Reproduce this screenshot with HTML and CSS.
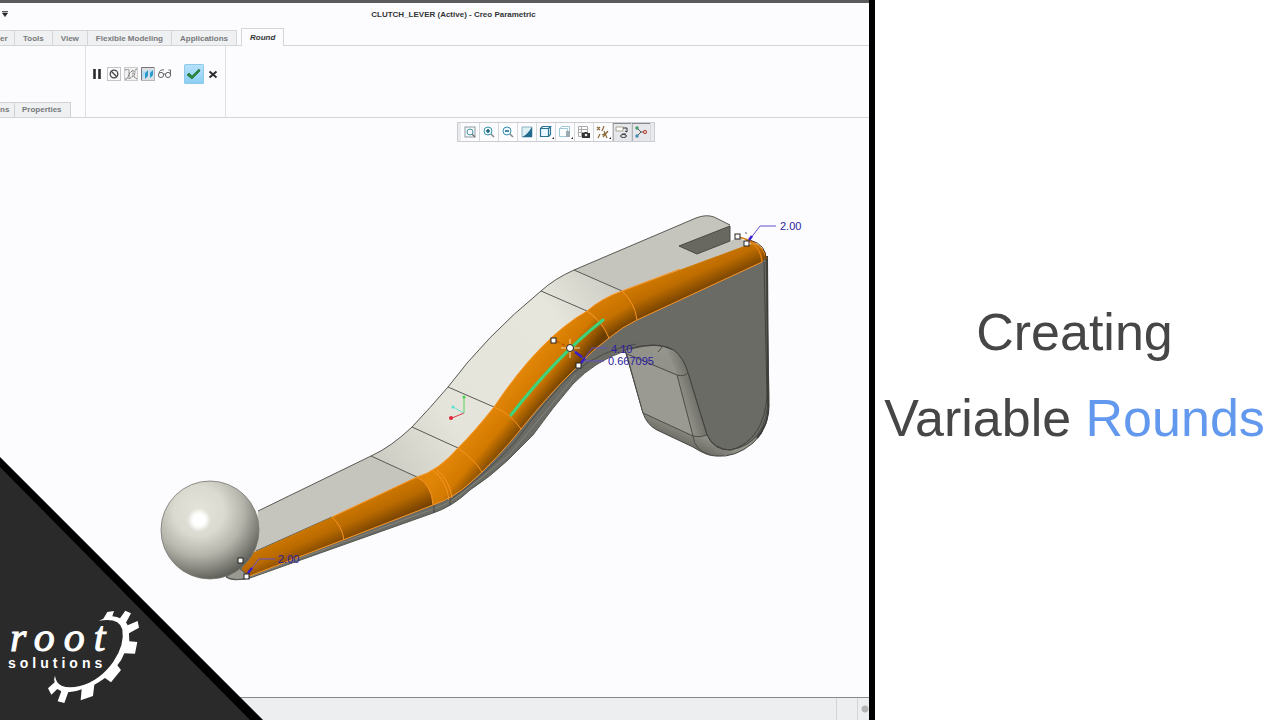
FILE: index.html
```html
<!DOCTYPE html>
<html lang="en">
<head>
<meta charset="utf-8">
<title>Creating Variable Rounds</title>
<link rel="stylesheet" href="styles.css">
</head>
<body>
<div class="slide">
  <main class="app">
    <header class="titlebar">
      <button class="menu-caret" aria-label="Customize toolbar">
        <svg width="6" height="6" viewBox="0 0 6 6"><path d="M0 .5H6M.5 2H5.5L3 5.500Z" stroke="#333" stroke-width=".8" fill="#222"/></svg>
      </button>
      <span class="title">CLUTCH_LEVER (Active) - Creo Parametric</span>
    </header>
    <nav class="tabs">
      <button class="tab tab-cut">er</button>
      <button class="tab">Tools</button>
      <button class="tab">View</button>
      <button class="tab">Flexible Modeling</button>
      <button class="tab">Applications</button>
      <button class="tab tab-active">Round</button>
    </nav>
    <section class="ribbon">
      <div class="ribbon-panels">
        <button class="panel-tab panel-cut">ns</button>
        <button class="panel-tab">Properties</button>
      </div>
      <div class="ribbon-actions">
        <button class="tool" aria-label="Pause"><svg width="16" height="16" viewBox="0 0 16 16"><path d="M5.500 3v10M10.500 3v10" stroke="#2b2b2b" stroke-width="2.600"/></svg></button>
        <button class="tool" aria-label="No preview"><svg width="16" height="16" viewBox="0 0 16 16"><rect x="1.500" y="1.500" width="13" height="13" fill="#fafafa" stroke="#c4c4c6"/><circle cx="8" cy="8" r="3.800" fill="none" stroke="#444" stroke-width="1.300"/><path d="M5.300 5.300l5.400 5.400" stroke="#444" stroke-width="1.300"/></svg></button>
        <button class="tool" aria-label="Unattached preview"><svg width="16" height="16" viewBox="0 0 16 16"><rect x="1.500" y="1.500" width="13" height="13" fill="#f1f1f1" stroke="#ccc"/><path d="M2 4q3-1 4 0v5l-2 4H2M6 8l4-4v6l-4 3zM14 3q-3 1-2 3l-1 5 3 2" fill="none" stroke="#777" stroke-dasharray="2 .7"/></svg></button>
        <button class="tool" aria-label="Attached preview"><svg width="16" height="16" viewBox="0 0 16 16"><rect x="1.500" y="1.500" width="13" height="13" fill="#dcdfe3" stroke="#b5b5b9"/><path d="M1.500 14V1.500H14" fill="none" stroke="#77777b"/><path d="M2 5h3v5l-3 3zM9 4h4v5l-3 3z" fill="#b5dcef"/><path d="M5 7l3-3v6l-3 3zM10 7l3-3v5l-3 3z" fill="#299acb"/></svg></button>
        <button class="tool" aria-label="Verify"><svg width="16" height="16" viewBox="0 0 16 16"><g fill="none" stroke="#666"><circle cx="4" cy="9" r="2.600"/><circle cx="11" cy="9" r="2.600"/><path d="M6.500 8h2M2 7q1-4 5-3M13.500 9V4h-2"/></g></svg></button>
        <button class="accept" aria-label="Accept"><svg width="20" height="20" viewBox="0 0 20 20"><path d="M3 11l2-2 3 3 7-7 1 2-8 8z" fill="#278a3a" stroke="#176628" stroke-width=".6"/></svg></button>
        <button class="tool" aria-label="Cancel"><svg width="16" height="16" viewBox="0 0 16 16"><path d="M4.500 5.500l7 6M11.500 5.500l-7 6" stroke="#2b2b2b" stroke-width="2"/></svg></button>
      </div>
    </section>
    <section class="viewport">
      <svg class="model" viewBox="0 118 869 579" role="img" aria-label="Clutch lever model">
        <defs>
          <radialGradient id="ball" gradientUnits="userSpaceOnUse" cx="199" cy="511" r="72">
            <stop offset="0" stop-color="#e4e4da"/><stop offset=".35" stop-color="#dadad0"/><stop offset=".62" stop-color="#b4b4ab"/><stop offset=".85" stop-color="#7c7c75"/><stop offset="1" stop-color="#565651"/>
          </radialGradient>
          <radialGradient id="shine"><stop offset="0" stop-color="#fff"/><stop offset=".5" stop-color="#fff"/><stop offset="1" stop-color="#fff" stop-opacity="0"/></radialGradient>
          <linearGradient id="bend" gradientUnits="userSpaceOnUse" x1="365" y1="470" x2="625" y2="275">
            <stop offset="0" stop-color="#c8c8c0"/><stop offset=".3" stop-color="#e4e4da"/><stop offset=".75" stop-color="#e6e6dd"/><stop offset="1" stop-color="#c8c8c0"/>
          </linearGradient>
          <linearGradient id="roundEnd" gradientUnits="userSpaceOnUse" x1="685" y1="264" x2="698" y2="293">
            <stop offset="0" stop-color="#d07900"/><stop offset=".45" stop-color="#bd6c00"/><stop offset="1" stop-color="#744100"/>
          </linearGradient>
          <linearGradient id="roundTop" gradientUnits="userSpaceOnUse" x1="604" y1="300" x2="622" y2="330">
            <stop offset="0" stop-color="#d67c02"/><stop offset=".5" stop-color="#c67200"/><stop offset="1" stop-color="#6f3f00"/>
          </linearGradient>
          <linearGradient id="roundMid" gradientUnits="userSpaceOnUse" x1="530" y1="363" x2="560" y2="388">
            <stop offset="0" stop-color="#e08506"/><stop offset=".5" stop-color="#d27900"/><stop offset="1" stop-color="#6a3d00"/>
          </linearGradient>
          <linearGradient id="roundTail" gradientUnits="userSpaceOnUse" x1="368" y1="500" x2="380" y2="527">
            <stop offset="0" stop-color="#cc7600"/><stop offset=".45" stop-color="#b96a00"/><stop offset="1" stop-color="#754100"/>
          </linearGradient>
          <linearGradient id="lip" gradientUnits="userSpaceOnUse" x1="680" y1="400" x2="700" y2="394">
            <stop offset="0" stop-color="#96968e"/><stop offset="1" stop-color="#65655f"/>
          </linearGradient>
          <linearGradient id="foot" gradientUnits="userSpaceOnUse" x1="673" y1="420" x2="664" y2="440">
            <stop offset="0" stop-color="#94948b"/><stop offset="1" stop-color="#62625c"/>
          </linearGradient>
        </defs>

        <!-- side wall and underside -->
        <path d="M226 577Q232 582 250 578L433 513Q452 507 470 490Q490 477 508 460L533 435Q553 407 573 384Q595 361 625 351L660 345Q680 348 688 373L707 435Q714 451 730 450Q768 444 769 397L766 256L640 300L560 360L460 480L250 560Z" fill="#6b6b65" stroke="#55554f"/>
        <path d="M247 578L433 509Q452 503 470 487L508 456Q550 407 576 375" fill="none" stroke="#83837b"/>
        <path d="M450 500Q485 475 515 442Q548 397 573 373Q602 350 636 344" fill="none" stroke="#4c4c47"/>
        <path d="M450 497v8M434 505v8" stroke="#444"/>

        <!-- hook -->
        <path d="M625 350Q655 340 673 350Q683 357 688 373L707 435Q714 449 730 450Q768 444 768 396Q772 426 753 443Q735 458 716 456Q707 456 693 447L657 430Q647 425 643 413Z" fill="url(#foot)" stroke="#454541"/>
        <path d="M673 350Q683 357 688 373L707 435Q700 438 693 436L677 375Q673 359 661 351Z" fill="url(#lip)"/>
        <path d="M627 354L677 375L693 436L643 413Z" fill="#9a9a92"/>
        <path d="M630 352Q668 347 677 375L630 354Z" fill="#92928a"/>
        <path d="M627 354L677 375L693 436L643 413M693 436Q700 438 707 435M693 436Q694 450 710 455M677 375Q684 377 688 373M658 352L663 346M643 413L626 352" fill="none" stroke="#4c4c48"/>
        <path d="M630 349Q660 341 674 350Q684 358 688 373L707 435Q714 451 731 450Q764 440 767 396L764 262" fill="none" stroke="#42423f"/>
        <path d="M767 256L768 397Q771 421 757 438" fill="none" stroke="#3d3d3a" stroke-width="2"/>

        <!-- top faces -->
        <path d="M258 511L371 456Q391 447 412 427Q430 408 448 387Q486 336 541 291Q554 279 574 270L696 218Q706 214 714 217L730 225V241L740 237L748 245L622 291L587 311L494 407L458 448L440 476L417 477L332 517L253 554Z" fill="#c5c5bd"/>
        <path d="M371 456Q391 447 412 427Q430 408 448 387Q486 336 541 291Q554 279 574 270L622 291L587 311L494 407L458 448L440 476L417 477Z" fill="url(#bend)"/>
        <path d="M258 511L371 456Q391 447 412 427Q430 408 448 387Q486 336 541 291Q554 279 574 270L696 218Q706 214 714 217L730 225M574 270L622 291M541 291L587 311M448 387L494 407M412 427L458 448M371 456L417 477M256 551L332 517" fill="none" stroke="#5a5a55"/>
        <path d="M679 246L730 226V241L697 254Z" fill="#686861" stroke="#4a4a46"/>

        <!-- variable round -->
        <path d="M622 291L747 245Q759 241 765 253Q767 258 762 262L637 320Z" fill="url(#roundEnd)"/>
        <path d="M417 477Q438 471 458 448Q475 431 494 407Q540 338 587 311Q602 321 609 338Q592 350 578 366Q550 393 521 429Q497 459 470 483Q455 497 433 505Z" fill="url(#roundMid)"/>
        <path d="M587 311Q602 298 622 291Q635 303 637 320Q622 327 609 338Q602 321 587 311Z" fill="url(#roundTop)"/>
        <path d="M417 477L332 517L257 551L248 554L241 571L247 577L343 540L433 505Q432 485 417 477Z" fill="url(#roundTail)"/>
        <path d="M332 517L417 477Q438 471 458 448Q475 431 494 407Q540 338 587 311Q602 298 622 291L680 269M247 577L343 540L433 505Q455 497 470 483Q497 459 521 429Q550 393 578 366Q592 350 609 338Q622 327 637 320L762 262M622 291Q635 303 637 320M587 311Q602 321 609 338M494 407Q511 414 521 429M458 448Q475 460 482 472M417 477Q432 485 433 505M434 471Q447 482 449 500M437 470Q450 481 452 498M332 517Q342 526 344 540" fill="none" stroke="#f99524"/>
        <path d="M739 237Q765 244 766 259M746 240Q761 246 762 262" fill="none" stroke="#d87c0b" stroke-width="1.500"/>
        <path d="M750 240Q767 245 766 260" fill="none" stroke="#513719"/>
        <path d="M511 415Q557 356 603 320" fill="none" stroke="#3ed47b" stroke-width="3" stroke-linecap="round"/>

        <!-- ball end -->
        <path d="M226 577Q237 582 250 577L239 568Z" fill="#9a9a93" stroke="#555"/>
        <circle cx="210" cy="530" r="49" fill="url(#ball)" stroke="#777771" stroke-width=".8"/>
        <circle cx="199" cy="520" r="12" fill="url(#shine)"/>

        <!-- coordinate triad -->
        <path d="M464 413V398" stroke="#58d05a"/><path d="M464 413L452 418" stroke="#df3548"/><path d="M464 413L453 407" stroke="#73ddd0"/>
        <circle cx="464" cy="397" r="1.500" fill="#42d64d"/><circle cx="451" cy="418" r="2" fill="#df2537"/><circle cx="453" cy="407" r="1.500" fill="#57e0d3"/>

        <!-- dimensions and drag handles -->
        <g fill="none" stroke="#5e50c8">
          <path d="M747 243L760 226H776M246 576L259 559H275M579 366L592 348H607M571 348L586 361H604"/>
          <path d="M248 573L252 568M749 240L752 236M581 363L585 358M575 352L582 357" stroke="#3920cf" stroke-width="2.500"/>
        </g>
        <path d="M556 341L566 346" stroke="#ad4b00" stroke-dasharray="4 2"/>
        <path d="M570 339V358M561 348H580" stroke="#f3d6a0"/>
        <circle cx="570" cy="348" r="3.500" fill="#fff" stroke="#222"/>
        <g fill="#fff" stroke="#222"><rect x="551" y="338" width="5" height="5"/><rect x="576" y="363" width="5" height="5"/><rect x="735" y="234" width="5" height="5"/><rect x="744" y="241" width="5" height="5"/><rect x="238" y="558" width="5" height="5"/><rect x="244" y="574" width="5" height="5"/></g>
        <circle cx="746" cy="233" r=".7" fill="#222"/>
        <g class="dimension"><text x="780" y="230">2.00</text><text x="611" y="353">4.10</text><text x="608" y="365">0.667095</text><text x="278" y="563">2.00</text></g>
      </svg>
      <div class="view-tools">
        <button class="view-tool" aria-label="Refit"><svg viewBox="0 0 18 18"><rect x="4" y="4" width="10" height="10" fill="#f6fafb" stroke="#8b9ca4"/><circle cx="9" cy="9" r="3" fill="none" stroke="#4692a8"/><path d="M11 11l3 3" stroke="#777" stroke-width="1.500"/></svg></button>
        <button class="view-tool" aria-label="Zoom in"><svg viewBox="0 0 18 18"><circle cx="8" cy="8" r="4" fill="#edfaff" stroke="#3b91ad"/><path d="M6 8h4M8 6v4" stroke="#185f83" stroke-width="1.500"/><path d="M11 11l3 3" stroke="#888" stroke-width="1.500"/></svg></button>
        <button class="view-tool" aria-label="Zoom out"><svg viewBox="0 0 18 18"><circle cx="8" cy="8" r="4" fill="#edfaff" stroke="#3b91ad"/><path d="M6 8h4" stroke="#185f83" stroke-width="1.500"/><path d="M11 11l3 3" stroke="#888" stroke-width="1.500"/></svg></button>
        <button class="view-tool" aria-label="Repaint"><svg viewBox="0 0 18 18"><path d="M4 4h10v10H4z" fill="#dfeff6" stroke="#8fb2c0"/><path d="M4 14Q9 12 14 4v10z" fill="#226b8d"/></svg></button>
        <button class="view-tool" aria-label="Display style"><svg viewBox="0 0 18 18"><path d="M3.500 5.500h8v8h-8zM3.500 5.500l2-2h8l-2 2M13.500 3.500v8l-2 2" fill="#eaf9ff" stroke="#287491" stroke-width="1.200"/><path d="M15 16h2v-2z" fill="#222"/></svg></button>
        <button class="view-tool" aria-label="Saved orientations"><svg viewBox="0 0 18 18"><path d="M3.500 5.500h8v8h-8zM3.500 5.500l2-2h8v8l-2 2" fill="#fff" stroke="#9bc9d8"/><path d="M10 8h4v6h-4z" fill="#9cabb0"/><path d="M15 16h2v-2z" fill="#222"/></svg></button>
        <button class="view-tool" aria-label="View manager"><svg viewBox="0 0 18 18"><path d="M3.500 3.500h9v10h-9zM3.500 6.500h9M3.500 9.500h9M6.500 3.500v10" fill="#fff" stroke="#aaa"/><path d="M7 10h2l1-1h2l1 1h2v5H7z" fill="#333"/><circle cx="11" cy="12" r="1.300" fill="#eee"/></svg></button>
        <button class="view-tool" aria-label="Datum display"><svg viewBox="0 0 18 18"><path d="M3 4l3 3M6 4l-3 3M10 3l-2 5M6 11l-2 4M8 12l6-3M10 8l3 7M14 8l-5 6" fill="none" stroke="#8d6a38" stroke-width="1.200"/><path d="M15 16h2v-2z" fill="#222"/></svg></button>
        <button class="view-tool pressed" aria-label="Annotation display"><svg viewBox="0 0 18 18"><path d="M3 4h7v4H3z" fill="#fff" stroke="#aaa68e"/><path d="M10 5h4v4l-2-1" fill="none" stroke="#333"/><ellipse cx="10.500" cy="13" rx="3" ry="1.500" fill="none" stroke="#333"/><path d="M9 11h4" stroke="#333"/></svg></button>
        <button class="view-tool pressed" aria-label="Spin center"><svg viewBox="0 0 18 18"><path d="M5 5l4 4-4 4M9 9h5" fill="none" stroke="#555"/><circle cx="5" cy="5" r="1.700" fill="#43976a"/><circle cx="5" cy="13" r="1.700" fill="#438bb3"/><circle cx="13" cy="9" r="1.700" fill="#e9b8b5" stroke="#af4944"/></svg></button>
      </div>
    </section>
    <footer class="status"><span class="status-cell"></span><span class="status-cell status-light"></span></footer>
  </main>
  <aside class="heading-panel">
    <h1 class="heading">Creating<br>Variable <span class="accent">Rounds</span></h1>
  </aside>
  <svg class="brand" viewBox="0 457 263 263" role="img" aria-label="root solutions">
    <path d="M0 457L263 720H0Z" fill="#000"/>
    <path d="M0 467L250 720H0Z" fill="#2a2a2a"/>
    <path transform="translate(0 590) scale(.3333)" fill="#fff" d="M297 92L310 86L322 66L342 63L337 79Q352 80 360 85L376 62L393 70L378 98Q381 100 383 106L413 93L417 113L387 130L388 154L412 156L405 191L373 190Q365 212 352 226L363 240L333 277L315 264Q300 275 283 284L279 318L242 331L245 298Q225 307 205 306L193 339L173 334L184 304L172 297L154 314L144 295L164 277Q160 268 165 257Q168 280 185 287Q205 296 240 288Q300 272 340 215Q375 165 367 118Q358 82 297 92Z"/>
    <text class="brand-name" x="10" y="651">root</text>
    <text class="brand-sub" x="8" y="668">solutions</text>
  </svg>
</div>
</body>
</html>
```
FILE: styles.css
```css
* { box-sizing: border-box; }
body { margin: 0; font-family: "Liberation Sans", Arial, sans-serif; background: #fff; }
button { font: inherit; color: inherit; margin: 0; padding: 0; border: 0; background: none; }
svg { display: block; }

.slide { position: relative; display: grid; grid-template-columns: 875fr 405fr; height: 100vh; overflow: hidden; }
.app { display: flex; flex-direction: column; min-width: 0; border-right: 6px solid #000; background: #fcfcfe; font-size: 8px; font-weight: 700; color: #77797c; }

.titlebar { display: flex; align-items: center; height: 28px; border-top: 3px solid #5c5a5b; padding: 0 0 3px 2px; }
.title { flex: 1; padding-left: 30px; text-align: center; color: #333436; }

.tabs { display: flex; align-items: flex-end; height: 18px; border-bottom: 1px solid #d3d5d8; }
.tab { height: 15px; padding: 0 8px; border: solid #d3d5d8; border-width: 1px 1px 0 0; background: #eff0f2; white-space: nowrap; }
.tab-cut { width: 15px; padding-left: 0; }
.tab-active { height: 18px; margin: 0 0 -1px 4px; border-width: 1px 1px 0 1px; background: #fcfcfe; color: #333436; font-style: italic; }

.ribbon { display: flex; height: 72px; border-bottom: 1px solid #d3d5d8; }
.ribbon-panels { display: flex; align-items: flex-end; width: 85px; }
.panel-tab { height: 15px; padding: 0 8px 2px 7px; border: solid #cfd1d4; border-width: 1px 1px 0 0; background: #eff0f2; }
.panel-cut { padding: 0 7px 2px 0; width: 15px; }
.ribbon-actions { display: flex; align-items: center; gap: 1px; padding: 0 4px 16px 3px; border: solid #dfe0e4; border-width: 0 1px; }
.accept { margin-left: 10px; border-radius: 2px; background: linear-gradient(#b9e3fa, #8bcdf4); box-shadow: inset 0 0 0 1px #8fc9ea; }

.viewport { position: relative; flex: 1; min-height: 0; }
.model { width: 100%; height: 100%; }
.dimension { font-size: 11px; font-weight: 400; fill: #2c20a0; }
.view-tools { position: absolute; top: 4px; left: 64%; display: flex; padding: 0 3px; border: 1px solid #cccdd0; background: #e9eaed; transform: translateX(-50%); }
.view-tool { width: 19px; height: 18px; border-right: 1px solid #d7d8db; background: #fcfcfe; }
.pressed { background: #e6e7eb; box-shadow: inset 0 1px #888a8e, inset 1px 0 #b0b1b5; }

.status { display: flex; justify-content: flex-end; height: 23px; border-top: 1px solid #88898b; background: #edeef0; }
.status-cell { width: 21px; border-left: 1px solid #d3d4d6; }
.status-light { width: 12px; background: radial-gradient(circle at 7px 11px, #b5b5b6 3px, transparent 4px); }

.heading-panel { display: flex; align-items: center; justify-content: center; padding: 30px 6px 0 0; background: #fff; }
.heading { margin: 0; font-size: 52px; line-height: 86px; font-weight: 400; text-align: center; white-space: nowrap; color: #464646; }
.accent { color: #6299ee; }

.brand { position: absolute; left: 0; bottom: 0; width: 263px; }
.brand-name { font: italic 42px "Liberation Serif", serif; letter-spacing: 9px; fill: #fff; stroke: #fff; stroke-width: 1px; }
.brand-sub { font: 700 14px "Liberation Sans", sans-serif; letter-spacing: 4px; fill: #fff; }
```
